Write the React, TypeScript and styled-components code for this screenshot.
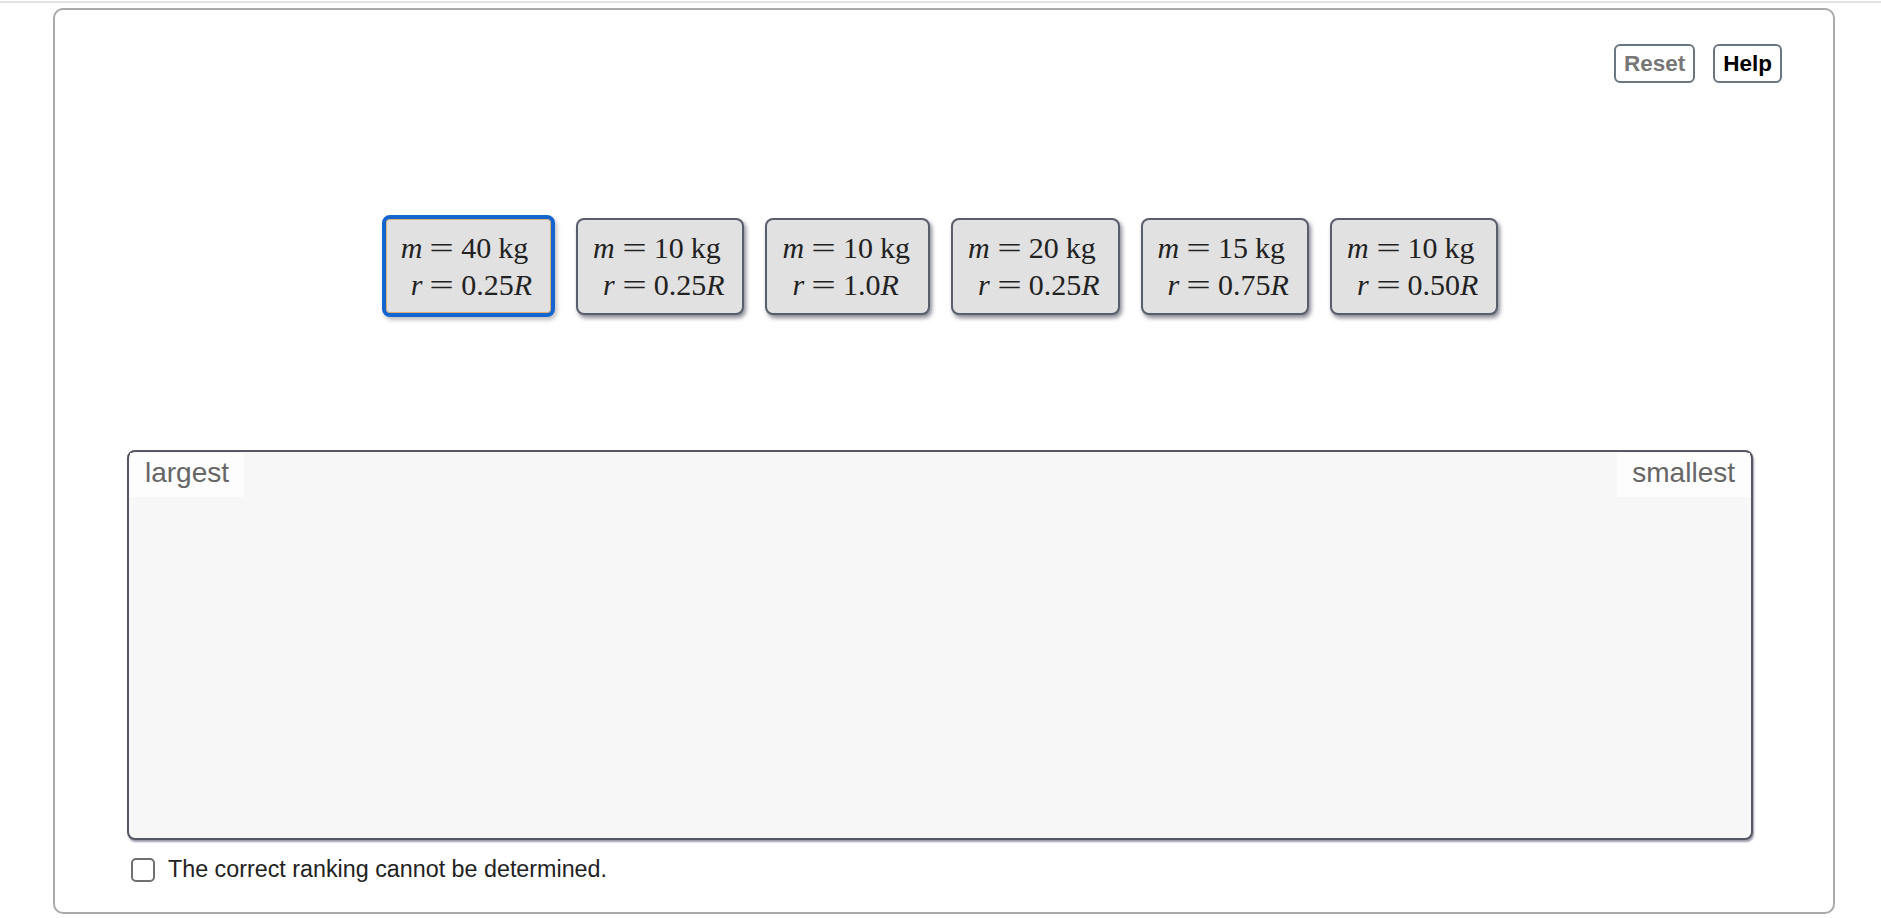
import styled, { createGlobalStyle } from 'styled-components'

const GlobalStyle = createGlobalStyle`
	html, body {
		margin: 0;
		padding: 0;
		background: #ffffff;
	}
	body {
		font-family: 'Liberation Sans', Arial, sans-serif;
		color: #222;
	}
`

interface Item {
	mass: string
	radius: string
	selected?: boolean
}

const items: Item[] = [
	{ mass: '40', radius: '0.25', selected: true },
	{ mass: '10', radius: '0.25' },
	{ mass: '10', radius: '1.0' },
	{ mass: '20', radius: '0.25' },
	{ mass: '15', radius: '0.75' },
	{ mass: '10', radius: '0.50' },
]

const App = () => {
	return (
		<>
			<GlobalStyle />
			<TopRule />
			<Panel>
				<Toolbar>
					<ToolButton muted>Reset</ToolButton>
					<ToolButton>Help</ToolButton>
				</Toolbar>
				<Body>
					<TileRow>
						{items.map((item, i) => (
							<Tile key={i} selected={item.selected}>
								<Equation>
									<Lhs><Var>m</Var></Lhs>
									<Rhs><Eq>=</Eq>{item.mass}<Unit>kg</Unit></Rhs>
									<Lhs><Var>r</Var></Lhs>
									<Rhs><Eq>=</Eq>{item.radius}<Var>R</Var></Rhs>
								</Equation>
							</Tile>
						))}
					</TileRow>
					<DropZone>
						<RankLabel>largest</RankLabel>
						<RankLabel>smallest</RankLabel>
					</DropZone>
					<CheckRow>
						<CheckBox type='checkbox' />
						<CheckText>The correct ranking cannot be determined.</CheckText>
					</CheckRow>
				</Body>
			</Panel>
		</>
	)
}

export default App

const TopRule = styled.div`
	height: 2px;
	margin-top: 1px;
	background: #e2e2e2;
`
const Panel = styled.div`
	margin: 5px 46px 0 53px;
	border: 2px solid #aaaaaa;
	border-radius: 10px;
	padding-bottom: 30px;
	background: #ffffff;
`
const Toolbar = styled.div`
	display: flex;
	justify-content: flex-end;
	gap: 18px;
	padding: 34px 51px 0 0;
`
const ToolButton = styled.button<{ muted?: boolean }>`
	height: 39px;
	padding: 0 8px;
	border: 2px solid #6b7780;
	border-radius: 6px;
	background: #ffffff;
	font-family: 'Liberation Sans', Arial, sans-serif;
	font-weight: bold;
	font-size: 22.5px;
	color: ${({ muted }) => (muted ? '#777777' : '#000000')};
	cursor: pointer;
`
const Body = styled.div`
	margin: 0 80px 0 72px;
`
const TileRow = styled.div`
	display: flex;
	justify-content: center;
	align-items: center;
	gap: 21px;
	margin-top: 132px;
	height: 102px;
`
const Tile = styled.div<{ selected?: boolean }>`
	box-sizing: border-box;
	height: ${({ selected }) => (selected ? '102px' : '97px')};
	padding: ${({ selected }) => (selected ? '0 19px 0 15px' : '0 18px 0 15px')};
	display: flex;
	align-items: center;
	background: #e1e1e1;
	border-radius: 8px;
	border: ${({ selected }) => (selected ? '4px solid #1565d0' : '2px solid #5a5d6b')};
	box-shadow: ${({ selected }) =>
		selected
			? 'inset 0 0 0 1px #dcae74, 2px 3px 4px rgba(0, 0, 0, 0.25)'
			: '2px 3px 4px rgba(40, 40, 60, 0.55)'};
	font-family: 'Liberation Serif', 'Times New Roman', serif;
	font-size: 30px;
	color: #222222;
`
const Equation = styled.div`
	display: grid;
	grid-template-columns: auto auto;
	line-height: 37px;
`
const Lhs = styled.span`
	text-align: right;
`
const Rhs = styled.span`
	text-align: left;
	white-space: nowrap;
`
const Var = styled.i`
	font-style: italic;
`
const Eq = styled.span`
	display: inline-block;
	margin: 0 11px;
	transform: scaleX(1.45);
`
const Unit = styled.span`
	margin-left: 7px;
`
const DropZone = styled.div`
	box-sizing: border-box;
	margin-top: 133px;
	height: 390px;
	display: flex;
	justify-content: space-between;
	align-items: flex-start;
	background: #f7f7f7;
	border: 2px solid #555762;
	border-radius: 8px;
	box-shadow: 1px 2px 2px rgba(70, 70, 100, 0.55);
	padding: 1px 1px 0;
`
const RankLabel = styled.span`
	padding: 2px 15px 6px;
	line-height: 36px;
	font-size: 28px;
	color: #666666;
	background: #fdfdfd;
`
const CheckRow = styled.label`
	display: flex;
	align-items: center;
	gap: 13px;
	margin: 17px 0 0 4px;
	height: 25px;
`
const CheckBox = styled.input`
	appearance: none;
	margin: 0;
	width: 24px;
	height: 24px;
	border: 2px solid #707070;
	border-radius: 5px;
	background: #ffffff;
`
const CheckText = styled.span`
	font-size: 23.3px;
	color: #222222;
`
